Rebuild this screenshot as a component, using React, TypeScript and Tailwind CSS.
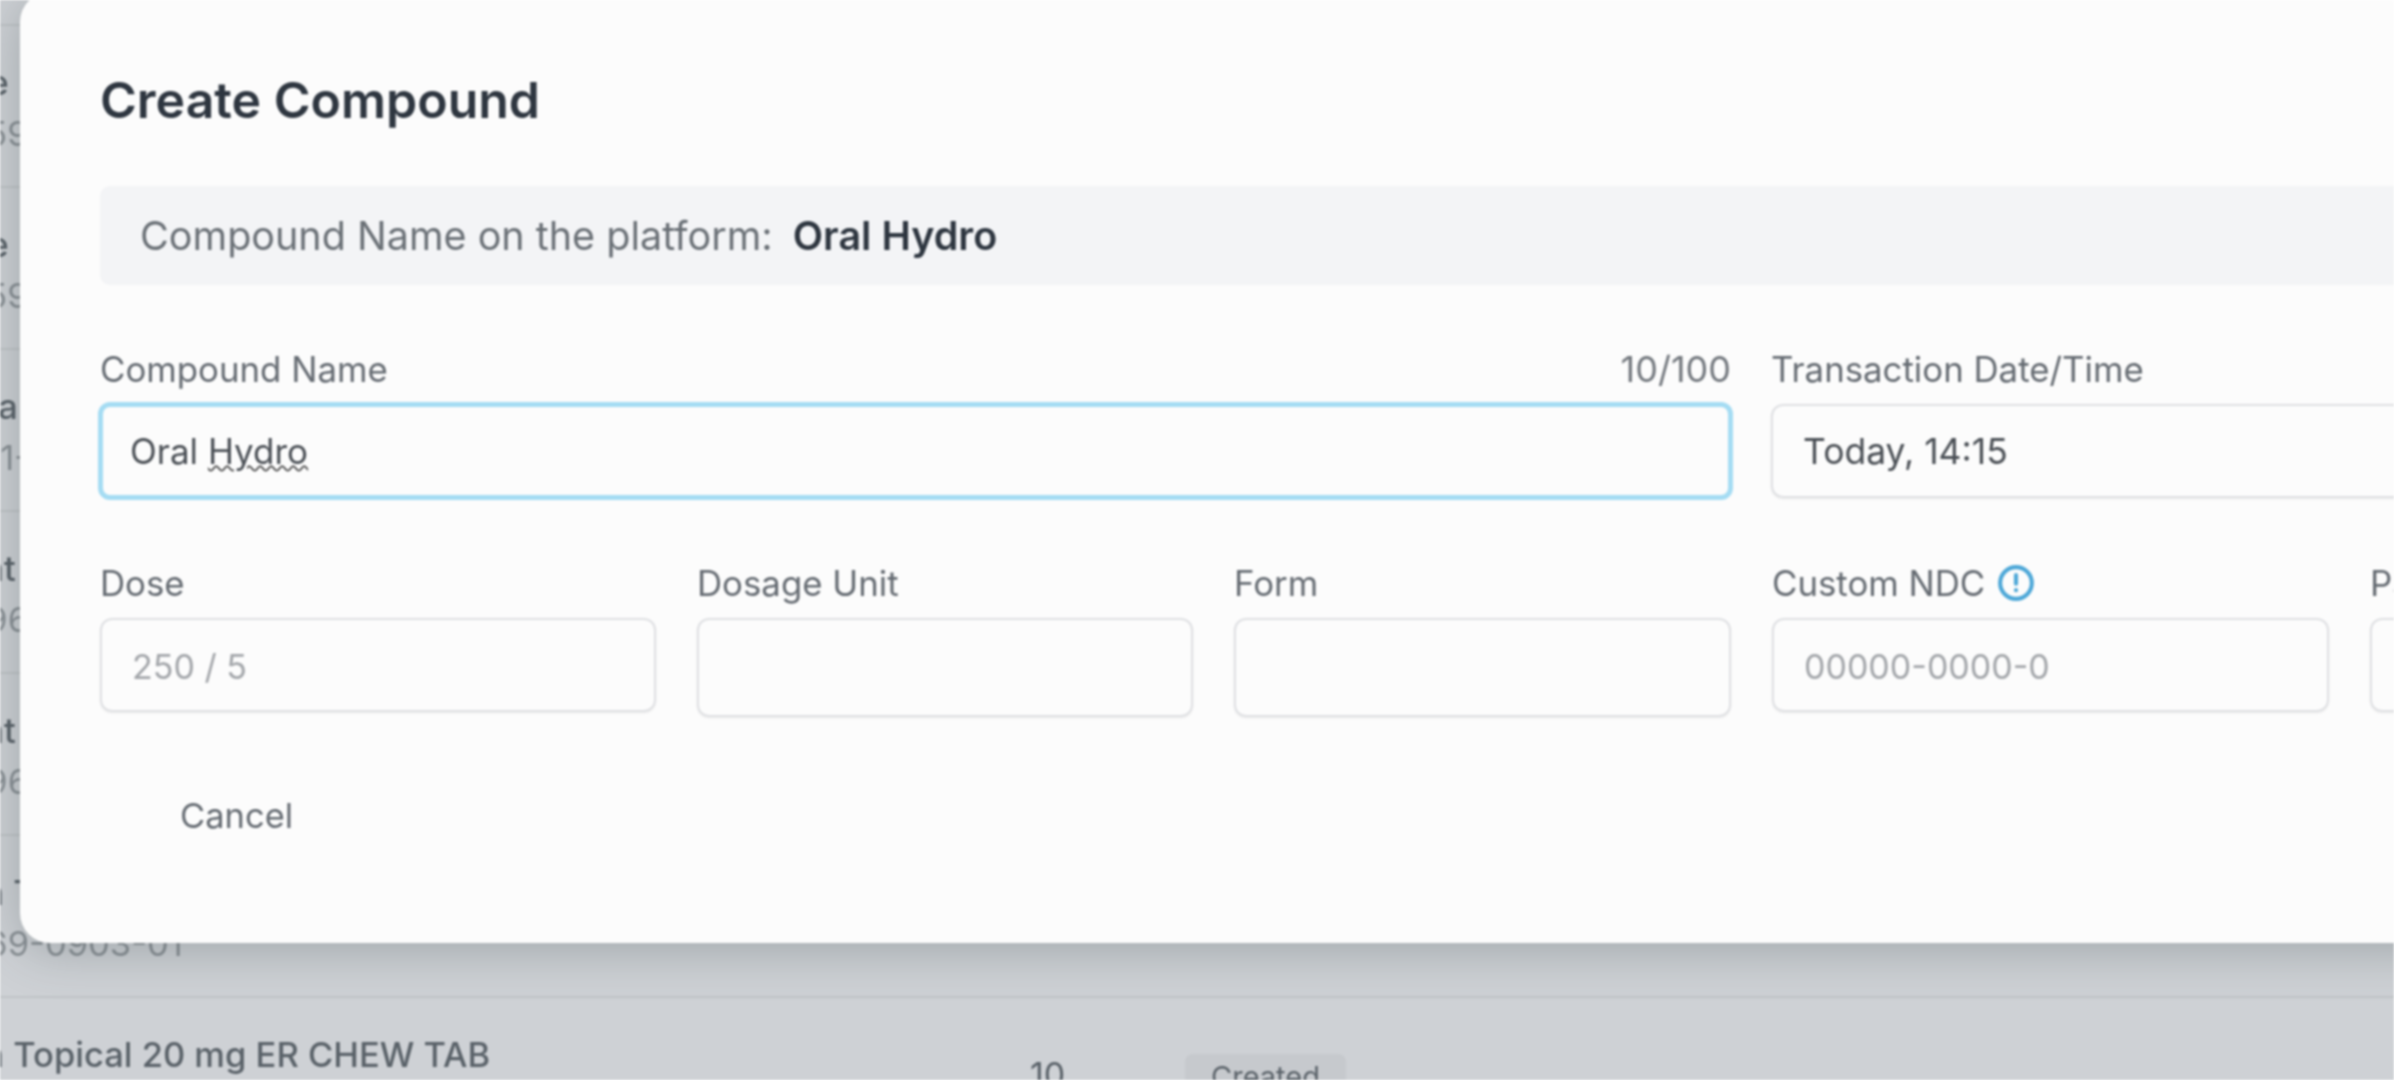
import React from "react";

// rows of the page behind the dialog, only their start shows left of it
const rows = [
  { name: "Pure", sub: "00059-1" },
  { name: "Pure", sub: "00059-2" },
  { name: "Dana", sub: "00011-" },
  { name: "Paint", sub: "00096-1" },
  { name: "Paint", sub: "00096-2" },
  { name: "Skin Topical", sub: "00069-0903-01" },
];

function Label({ children }: { children: React.ReactNode }) {
  return <div className="h-[36px] flex items-center gap-[12px] text-[34.8px] text-[#656b72] whitespace-nowrap">{children}</div>;
}

function Field({ text, placeholder, tall }: { text?: string; placeholder?: string; tall?: boolean }) {
  return (
    <div className={`${tall ? "h-[99px]" : "h-[94px]"} mt-[17px] rounded-[12px] border-2 border-[#dfe0e3] shadow-[0_1px_2px_rgba(0,0,0,0.08)] flex items-center pl-[30px] pt-[2px] whitespace-nowrap ${placeholder ? "text-[34px] text-[#a3a6aa]" : "text-[35.5px] text-[#4a4f55]"}`}>
      {text || placeholder}
    </div>
  );
}

export default function App() {
  return (
    <div className="relative h-[1080px] w-[2394px] overflow-hidden bg-[#ced1d5] blur-[0.8px] font-['Inter',sans-serif]">
      {/* page behind the dialog */}
      <div className="h-[26px] border-b-2 border-[#c0c4c7]" />
      {rows.map((row, i) => (
        <div key={i} className="h-[162px] border-b-2 border-[#c0c4c7] pt-[42px] -ml-[67px]">
          <div className="h-[30px] leading-[30px] text-[34.5px] font-medium text-[#5a6269] whitespace-nowrap">{row.name}</div>
          <div className="h-[30px] leading-[30px] mt-[21px] -ml-[12px] text-[34.5px] text-[#8b9196] whitespace-nowrap">{row.sub}</div>
        </div>
      ))}
      <div className="flex -ml-[67px] h-[82px]">
        <div className="w-[1097px] pt-[42px] h-[30px] leading-[30px] text-[34.5px] font-medium text-[#5a6269] whitespace-nowrap">Skin Topical 20 mg ER CHEW TAB</div>
        <div className="w-[155px] pt-[62px] text-[34px] leading-[30px] text-[#5a6269]">10</div>
        <div className="mt-[56px] h-[46px] w-[161px] rounded-[8px] bg-[#c6c9cd] flex items-center justify-center text-[29px] text-[#5a6269]">Created</div>
      </div>

      {/* dialog */}
      <div className="absolute left-[20px] top-[-8px] w-[2600px] rounded-[30px] bg-[#fcfcfc] pl-[80px] pt-[85px] pb-[97px] shadow-[0_6px_50px_rgba(60,75,80,0.33)]">
        <h2 className="h-[46px] leading-[46px] text-[50px] font-semibold text-[#2e3640]">Create Compound</h2>

        <div className="mt-[63px] h-[99px] rounded-[10px] bg-[#f3f4f6] flex items-center pl-[40px] pt-[2px] text-[39.5px] whitespace-nowrap">
          <span className="text-[#6a7076]">Compound Name on the platform:</span>
          <span className="ml-[20px] font-semibold text-[#2e3640]">Oral Hydro</span>
        </div>

        <div className="mt-[66px] flex gap-[40px]">
          <div className="w-[1631px]">
            <Label>
              <span className="flex-1">Compound Name</span>
              <span className="text-[36px] text-[#73787e]">10/100</span>
            </Label>
            <div className="-mx-[2px] mt-[15px] h-[98px] rounded-[12px] border-[5px] border-[#a5dcf3] flex items-center pl-[27px] text-[35px] text-[#4a4f55] whitespace-nowrap">
              <span>
                Oral <span className="underline decoration-wavy decoration-[#555] decoration-[2px]">Hydro</span>
              </span>
            </div>
          </div>
          <div className="w-[800px]">
            <Label>Transaction Date/Time</Label>
            <Field text="Today, 14:15" />
          </div>
        </div>

        <div className="mt-[65px] flex items-start gap-[41px]">
          <div className="w-[556px]">
            <Label>Dose</Label>
            <Field placeholder="250 / 5" />
          </div>
          <div className="w-[496px]">
            <Label>Dosage Unit</Label>
            <Field tall />
          </div>
          <div className="w-[497px]">
            <Label>Form</Label>
            <Field tall />
          </div>
          <div className="w-[557px]">
            <Label>
              Custom NDC
              <svg width="38" height="38" viewBox="0 0 24 24" fill="none" stroke="#4ea8d8" strokeWidth="2.6" strokeLinecap="round">
                <circle cx="12" cy="12" r="10" />
                <path d="M12 7v5.5" />
                <path d="M12 16.4v.1" />
              </svg>
            </Label>
            <Field placeholder="00000-0000-0" />
          </div>
          <div className="w-[200px]">
            <Label>Package</Label>
            <Field />
          </div>
        </div>

        <button className="mt-[69px] ml-[80px] h-[60px] block text-[34.5px] text-[#656b72]">Cancel</button>
      </div>
    </div>
  );
}
